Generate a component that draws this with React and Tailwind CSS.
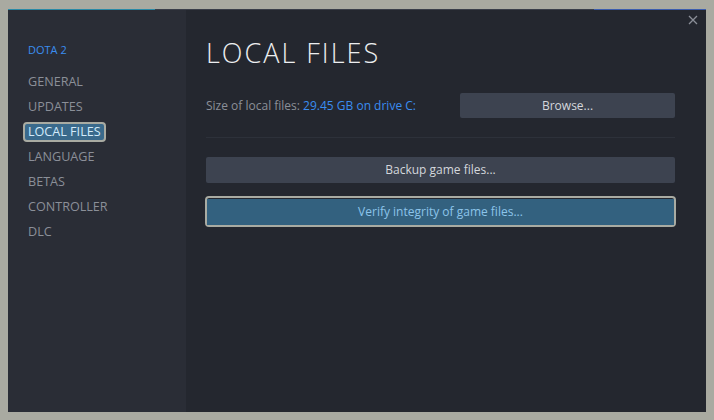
import React from 'react';

const navItems = ['GENERAL', 'UPDATES', 'LOCAL FILES', 'LANGUAGE', 'BETAS', 'CONTROLLER', 'DLC'];

const App = () => {
  const active = 'LOCAL FILES';

  return (
    <div
      className="w-[714px] h-[420px] bg-[#a9aaa1] pt-[9px] pl-[8px] pr-[8px] pb-[8px]"
      style={{ fontFamily: '"Open Sans", "Noto Sans", sans-serif' }}
    >
      <div className="relative w-[698px] h-[403px] flex flex-col bg-[#24272f]">
        {/* top accent line */}
        <div className="h-px w-full bg-[linear-gradient(90deg,#2a8aa6_0%,#2a8aa6_21%,#3a3f4a_21%,#3a3f4a_84%,#3b5dae_84%,#3b5dae_100%)]" />

        <div className="flex flex-1">
          {/* sidebar */}
          <div className="w-[178px] bg-[#2a2d36] pt-[32px] pl-[15px]">
            <div className="pl-[5px] text-[11px] leading-[16px] font-medium text-[#3a8df0] mb-[14px]">DOTA 2</div>
            <div className="flex flex-col gap-[5px]">
              {navItems.map((item) =>
                item === active ? (
                  <div key={item} className="h-[20px] flex items-center">
                    <span className="inline-block border-2 border-[#a9aba2] rounded-[4px] bg-[#3a6a8c] px-[3px] text-[12.6px] leading-[16px] font-medium text-[#d2ebfb]">
                      {item}
                    </span>
                  </div>
                ) : (
                  <div key={item} className="h-[20px] flex items-center pl-[5px] text-[12.6px] font-medium text-[#8b8f98]">
                    {item}
                  </div>
                )
              )}
            </div>
          </div>

          {/* main */}
          <div className="flex-1 pl-[20px] pr-[31px] pt-[26px]">
            <h1 className="text-[27px] leading-[34px] font-light tracking-[2px] text-[#eceef0]">LOCAL FILES</h1>

            <div className="mt-[23px] flex items-center justify-between">
              <div className="text-[12px] text-[#8b8f98]">
                Size of local files: <span className="text-[#3a8df0]">29.45 GB on drive C:</span>
              </div>
              <button className="w-[215px] h-[25px] bg-[#3d4350] rounded-[2px] text-[12px] text-[#d4d7dc]">
                Browse...
              </button>
            </div>

            <div className="mt-[19px] h-px bg-[#2d313a]" />

            <button className="mt-[19px] w-full h-[26px] bg-[#3d4350] rounded-[2px] text-[12px] text-[#d4d7dc]">
              Backup game files...
            </button>

            <div className="mt-[13px] -mx-[1px] border-2 border-[#a9aba2] rounded-[4px]">
              <button className="w-full h-[26px] bg-[#33617f] text-[12px] text-[#8cc4ea]">
                Verify integrity of game files...
              </button>
            </div>
          </div>
        </div>

        {/* close */}
        <button className="absolute top-[6px] right-[8px] w-[10px] h-[10px] text-[#8b8f98]">
          <svg viewBox="0 0 10 10" width="10" height="10" fill="none" stroke="currentColor" strokeWidth="1.3">
            <path d="M1 1 L9 9 M9 1 L1 9" />
          </svg>
        </button>
      </div>
    </div>
  );
};

export default App;
